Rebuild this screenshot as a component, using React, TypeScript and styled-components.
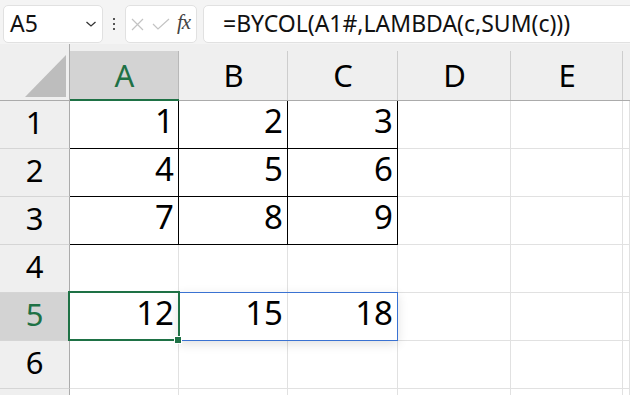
import styled, { createGlobalStyle } from "styled-components";

const FONT = `"Noto Sans", "Noto Sans CJK JP", sans-serif`;
const GREEN = "#1e7145";
const BLUE = "#3a72d2";

const GlobalStyle = createGlobalStyle`
  body {
    margin: 0;
    background: #ffffff;
    overflow: hidden;
  }
`;

const Page = styled.div`
  width: 630px;
  height: 395px;
  overflow: hidden;
  font-family: ${FONT};
  color: #000;
  background: #fff;
`;

/* formula bar */
const FormulaBar = styled.div`
  display: flex;
  align-items: flex-start;
  height: 44px;
  box-sizing: border-box;
  padding: 5px 0 0 3px;
  background: #f4f4f4;
`;

const Box = styled.div<{ $width?: number }>`
  display: flex;
  align-items: center;
  box-sizing: border-box;
  height: 38px;
  background: #fff;
  border: 1px solid #e1e1e1;
  border-radius: 5px;
  ${(p) => (p.$width ? `width: ${p.$width}px; flex: none;` : "flex: 1; margin-right: -12px;")}
`;

const Spacer = styled.div`
  width: 6px;
  flex: none;
`;

const NameText = styled.span`
  flex: 1;
  padding: 0 0 2px 6px;
  font-size: 23px;
  color: #111;
`;

const Chevron = styled.svg`
  width: 12px;
  height: 8px;
  margin-right: 5px;
`;

const Dots = styled.div`
  display: flex;
  flex-direction: column;
  align-items: center;
  justify-content: center;
  gap: 2.5px;
  width: 22px;
  height: 38px;
  flex: none;

  span {
    width: 2.5px;
    height: 2.5px;
    background: #555;
  }
`;

const IconButton = styled.div`
  display: flex;
  align-items: center;
  justify-content: center;
  width: 23px;
  height: 36px;
`;

const Fx = styled.span`
  font-family: "Liberation Serif", "DejaVu Serif", serif;
  font-style: italic;
  font-size: 21px;
  color: #444;
  letter-spacing: -1px;
  padding-bottom: 3px;
`;

const FormulaText = styled.span`
  padding: 0 0 3px 19px;
  font-size: 23px;
  color: #111;
  white-space: nowrap;
`;

/* sheet */
const COLS = [70, 109, 109, 110, 113, 112];
const HEADER_H = 57;
const ROW_H = 48;
const ROWS = 7;

const Sheet = styled.div`
  position: relative;
  display: grid;
  grid-template-columns: ${COLS.map((c) => `${c}px`).join(" ")} 1fr;
  grid-template-rows: ${HEADER_H}px repeat(${ROWS}, ${ROW_H}px);
`;

const Corner = styled.div`
  display: flex;
  align-items: flex-end;
  justify-content: flex-end;
  box-sizing: border-box;
  padding: 0 3px 3px 0;
  background: #efefef;
  border-right: 1px solid #ababab;
  border-bottom: 1px solid #ababab;
`;

const ColHeader = styled.div<{ $active?: boolean; $last?: boolean }>`
  display: flex;
  align-items: center;
  justify-content: center;
  box-sizing: border-box;
  font-size: 31px;
  padding-bottom: 2px;
  background: linear-gradient(
    to bottom,
    #efefef 0,
    #efefef 7px,
    ${(p) => (p.$active ? "#d3d3d3" : "#efefef")} 7px
  );
  color: ${(p) => (p.$active ? GREEN : "#000")};
  border-bottom: ${(p) => (p.$active ? `2px solid ${GREEN}` : "1px solid #ababab")};
  padding-top: ${(p) => (p.$active ? 8 : 7)}px;
  position: relative;

  &::after {
    content: "";
    position: absolute;
    right: 0;
    top: 7px;
    bottom: 0;
    width: 1px;
    background: ${(p) => (p.$last ? "transparent" : p.$active ? "#b8b8b8" : "#cdcdcd")};
  }
`;

const RowHeader = styled.div<{ $active?: boolean }>`
  display: flex;
  align-items: center;
  justify-content: center;
  box-sizing: border-box;
  padding-bottom: 6px;
  font-size: 31px;
  background: ${(p) => (p.$active ? "#d3d3d3" : "#efefef")};
  color: ${(p) => (p.$active ? GREEN : "#000")};
  border-right: 1px solid #ababab;
  border-bottom: 1px solid #d5d5d5;
`;

const Cell = styled.div<{ $boxed?: boolean }>`
  display: flex;
  align-items: center;
  justify-content: flex-end;
  box-sizing: border-box;
  padding: 0 4px 8px 0;
  font-size: 33px;
  border-right: 1px solid ${(p) => (p.$boxed ? "#000" : "#e1e1e1")};
  border-bottom: 1px solid ${(p) => (p.$boxed ? "#000" : "#e1e1e1")};
`;

const Spill = styled.div`
  position: absolute;
  box-sizing: border-box;
  border: 1px solid ${BLUE};
  box-shadow: 0 3px 10px rgba(0, 0, 0, 0.12);
  pointer-events: none;
`;

const Active = styled.div`
  position: absolute;
  box-sizing: border-box;
  border: 2px solid ${GREEN};
  pointer-events: none;
`;

const FillHandle = styled.div`
  position: absolute;
  width: 6px;
  height: 6px;
  background: ${GREEN};
  box-shadow: 0 0 0 1px #fff;
`;

const letters = ["A", "B", "C", "D", "E", ""];
const data: (number | null)[][] = [
  [1, 2, 3],
  [4, 5, 6],
  [7, 8, 9],
  [],
  [12, 15, 18],
  [],
  [],
];

const colLeft = (i: number) => COLS.slice(0, i).reduce((a, b) => a + b, 0);
const rowTop = (r: number) => HEADER_H + r * ROW_H;

export default function App() {
  const aLeft = colLeft(1);
  const r5Top = rowTop(4);
  return (
    <Page>
      <GlobalStyle />
      <FormulaBar>
        <Box $width={100}>
          <NameText>A5</NameText>
          <Chevron viewBox="0 0 12 8">
            <path d="M1.5 2 L6 6 L10.5 2" fill="none" stroke="#333" strokeWidth="1.3" />
          </Chevron>
        </Box>
        <Dots>
          <span />
          <span />
          <span />
        </Dots>
        <Box $width={72}>
          <IconButton>
            <svg width="13" height="13" viewBox="0 0 13 13">
              <path d="M1 1 L12 12 M12 1 L1 12" stroke="#c3c3c3" strokeWidth="1.2" fill="none" />
            </svg>
          </IconButton>
          <IconButton>
            <svg width="18" height="12" viewBox="0 0 18 12">
              <path d="M1 6 L6 11 L17 1" stroke="#c3c3c3" strokeWidth="1.2" fill="none" />
            </svg>
          </IconButton>
          <IconButton>
            <Fx>fx</Fx>
          </IconButton>
        </Box>
        <Spacer />
        <Box>
          <FormulaText>=BYCOL(A1#,LAMBDA(c,SUM(c)))</FormulaText>
        </Box>
      </FormulaBar>

      <Sheet>
        <Corner>
          <svg width="41" height="42" viewBox="0 0 41 42">
            <polygon points="41,0 41,42 0,42" fill="#bdbdbd" />
          </svg>
        </Corner>
        {letters.map((l, i) => (
          <ColHeader key={i} $active={l === "A"} $last={l === ""}>
            {l}
          </ColHeader>
        ))}
        {data.map((row, r) => [
          <RowHeader key={`h${r}`} $active={r === 4}>
            {/* the last row only peeks in at the bottom edge */}
            {r < ROWS - 1 ? r + 1 : ""}
          </RowHeader>,
          ...[0, 1, 2, 3, 4, 5].map((c) => (
            <Cell key={`c${r}-${c}`} $boxed={r < 3 && c < 3}>
              {row[c] ?? ""}
            </Cell>
          )),
        ])}

        <Spill
          style={{
            left: aLeft + COLS[1] - 1,
            top: r5Top - 1,
            width: COLS[2] + COLS[3] + 1,
            height: ROW_H + 1,
          }}
        />
        <Active
          style={{
            left: aLeft - 2,
            top: r5Top - 2,
            width: COLS[1] + 3,
            height: ROW_H + 2,
          }}
        />
        <FillHandle
          style={{
            left: aLeft + COLS[1] - 4,
            top: r5Top + ROW_H - 4,
          }}
        />
      </Sheet>
    </Page>
  );
}
